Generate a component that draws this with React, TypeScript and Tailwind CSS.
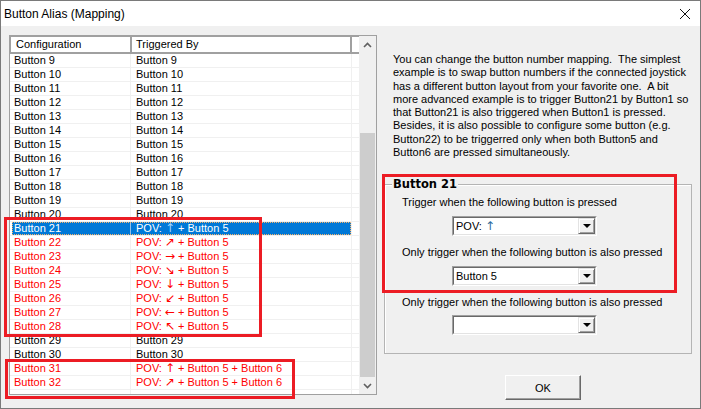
import React from 'react'

type Row = { name: string; trig: string; red?: boolean; selected?: boolean }

const rows: Row[] = [
  ...Array.from({ length: 12 }, (_, i) => ({ name: `Button ${i + 9}`, trig: `Button ${i + 9}` })),
  { name: 'Button 21', trig: 'POV: ↑ + Button 5', red: true, selected: true },
  { name: 'Button 22', trig: 'POV: ↗ + Button 5', red: true },
  { name: 'Button 23', trig: 'POV: → + Button 5', red: true },
  { name: 'Button 24', trig: 'POV: ↘ + Button 5', red: true },
  { name: 'Button 25', trig: 'POV: ↓ + Button 5', red: true },
  { name: 'Button 26', trig: 'POV: ↙ + Button 5', red: true },
  { name: 'Button 27', trig: 'POV: ← + Button 5', red: true },
  { name: 'Button 28', trig: 'POV: ↖ + Button 5', red: true },
  { name: 'Button 29', trig: 'Button 29' },
  { name: 'Button 30', trig: 'Button 30' },
  { name: 'Button 31', trig: 'POV: ↑ + Button 5 + Button 6', red: true },
  { name: 'Button 32', trig: 'POV: ↗ + Button 5 + Button 6', red: true },
  { name: '', trig: '' },
]

const helpLines = [
  'You can change the button number mapping.  The simplest',
  'example is to swap button numbers if the connected joystick',
  'has a different button layout from your favorite one.  A bit',
  'more advanced example is to trigger Button21 by Button1 so',
  'that Button21 is also triggered when Button1 is pressed.',
  'Besides, it is also possible to configure some button (e.g.',
  'Button22) to be triggerred only when both Button5 and',
  'Button6 are pressed simultaneously.',
]

function Combo({ value }: { value?: React.ReactNode }) {
  return (
    <div className="w-[145px] h-[20px] flex border border-t-[#a0a0a0] border-l-[#a0a0a0] border-r-white border-b-white">
      <div className="flex-1 flex border border-t-[#696969] border-l-[#696969] border-r-[#e3e3e3] border-b-[#e3e3e3] bg-white">
        <span className="flex-1 pl-[2px] leading-[16px] whitespace-pre">{value}</span>
        <div className="w-[17px] flex items-center justify-center bg-[#f0f0f0] border border-t-[#e3e3e3] border-l-[#e3e3e3] border-r-[#696969] border-b-[#696969] shadow-[inset_1px_1px_0_#fff,inset_-1px_-1px_0_#a0a0a0]">
          <div className="w-0 h-0 border-x-[4px] border-x-transparent border-t-[4px] border-t-black" />
        </div>
      </div>
    </div>
  )
}

function ListRow({ r }: { r: Row }) {
  const color = r.selected ? 'text-white' : r.red ? 'text-[#ff0000]' : 'text-black'
  const parts = r.trig.match(/^(POV: )(.)(.*)$/)
  return (
    <div className="h-[14px] flex border-b border-[#f0f0f0] shrink-0">
      <div
        className={
          'ml-[2px] flex ' +
          (r.selected ? 'bg-[#0078d7] outline outline-1 outline-dotted outline-[#f5b36b] -outline-offset-1' : '')
        }
      >
        <div className={`w-[119px] pl-[2px] leading-[13px] border-r ${r.selected ? 'border-[#8fc0ea]' : 'border-[#f0f0f0]'} ${color}`}>
          {r.name}
        </div>
        <div className={`w-[220px] pl-[5px] leading-[13px] whitespace-pre ${color}`}>
          {parts ? (
            <>
              {parts[1]}
              <span className={`font-['DejaVu_Sans',sans-serif] text-[12px] leading-[13px] ${r.selected ? 'text-[#9fd3ff]' : ''}`}>{parts[2]}</span>
              {parts[3]}
            </>
          ) : (
            r.trig
          )}
        </div>
      </div>
      <div className="w-[1px] bg-[#f0f0f0]" />
    </div>
  )
}

export default function App() {
  return (
    <div className="w-[701px] h-[409px] relative overflow-hidden flex flex-col border border-[#7a7a7a] bg-[#f0f0f0] text-[11px] text-black font-['Liberation_Sans','DejaVu_Sans',Arial,sans-serif]">
      {/* title bar */}
      <div className="h-[25px] shrink-0 bg-white flex items-center justify-between pl-[3px] pr-[9px]">
        <span className="text-[12px]">Button Alias (Mapping)</span>
        <svg width="12" height="12" viewBox="0 0 12 12">
          <path d="M1 1 L11 11 M11 1 L1 11" stroke="#111" strokeWidth="1" fill="none" />
        </svg>
      </div>

      <div className="flex-1 flex pl-[8px] pt-[9px]">
        {/* list view */}
        <div className="w-[368px] h-[360px] border border-[#a0a0a0] bg-white flex">
          <div className="w-[349px] flex flex-col overflow-hidden">
            <div className="h-[18px] shrink-0 flex border-t border-l border-[#a0a0a0]">
              <div className="w-[121px] pl-[5px] leading-[15px] border-r-2 border-b-2 border-[#a0a0a0]">Configuration</div>
              <div className="w-[220px] pl-[4px] leading-[15px] border-r-2 border-b-2 border-[#a0a0a0]">Triggered By</div>
              <div className="flex-1 border-b-2 border-[#a0a0a0]" />
            </div>
            {rows.map((r, i) => (
              <ListRow key={i} r={r} />
            ))}
          </div>
          {/* scrollbar */}
          <div className="w-[17px] flex flex-col bg-[#f0f0f0]">
            <div className="h-[17px] flex items-center justify-center">
              <svg width="9" height="6" viewBox="0 0 9 6">
                <path d="M1 5 L4.5 1.5 L8 5" stroke="#606060" strokeWidth="1.6" fill="none" />
              </svg>
            </div>
            <div className="flex-1 pt-[80px]">
              <div className="h-[244px] mx-[1px] bg-[#cdcdcd]" />
            </div>
            <div className="h-[17px] flex items-center justify-center">
              <svg width="9" height="6" viewBox="0 0 9 6">
                <path d="M1 1 L4.5 4.5 L8 1" stroke="#606060" strokeWidth="1.6" fill="none" />
              </svg>
            </div>
          </div>
        </div>

        {/* right pane */}
        <div className="w-[308px] ml-[7px] flex flex-col">
          <div className="mt-[18px] pl-[9px] leading-[13.3px] whitespace-pre">
            {helpLines.map((l, i) => (
              <div key={i}>{l}</div>
            ))}
          </div>

          <div className="mt-[25px] relative h-[170px] border border-[#b4b4b4] shadow-[inset_1px_1px_0_#fff] flex flex-col pt-[11px] pl-[17px]">
            <span className="absolute left-[7px] top-[-8px] px-[1px] bg-[#f0f0f0] font-bold leading-[15px] font-['DejaVu_Sans',sans-serif] text-[11.5px]">
              Button 21
            </span>
            <div className="leading-[13px]">Trigger when the following button is pressed</div>
            <div className="mt-[7px] ml-[50px]">
              <Combo value={<>POV: <span className="font-['DejaVu_Sans',sans-serif] text-[12px] leading-[13px] text-[#2c6a9a]">↑</span></>} />
            </div>
            <div className="mt-[10px] leading-[13px]">Only trigger when the following button is also pressed</div>
            <div className="mt-[7px] ml-[50px]">
              <Combo value="Button 5" />
            </div>
            <div className="mt-[10px] leading-[13px]">Only trigger when the following button is also pressed</div>
            <div className="mt-[6px] ml-[50px]">
              <Combo />
            </div>
          </div>

          <button className="mt-[21px] ml-[121px] w-[76px] h-[25px] bg-[#f0f0f0] border border-t-white border-l-white border-r-[#696969] border-b-[#696969] shadow-[inset_-1px_-1px_0_#a0a0a0] text-[11px]">
            OK
          </button>
        </div>
      </div>

      {/* red annotation boxes */}
      <div className="absolute left-[3px] top-[216px] w-[258px] h-[120px] border-[3px] border-[#ec1c24]" />
      <div className="absolute left-[4px] top-[358px] w-[290px] h-[40px] border-[3px] border-[#ec1c24]" />
      <div className="absolute left-[381px] top-[173px] w-[295px] h-[119px] border-[3px] border-[#ec1c24]" />
    </div>
  )
}
